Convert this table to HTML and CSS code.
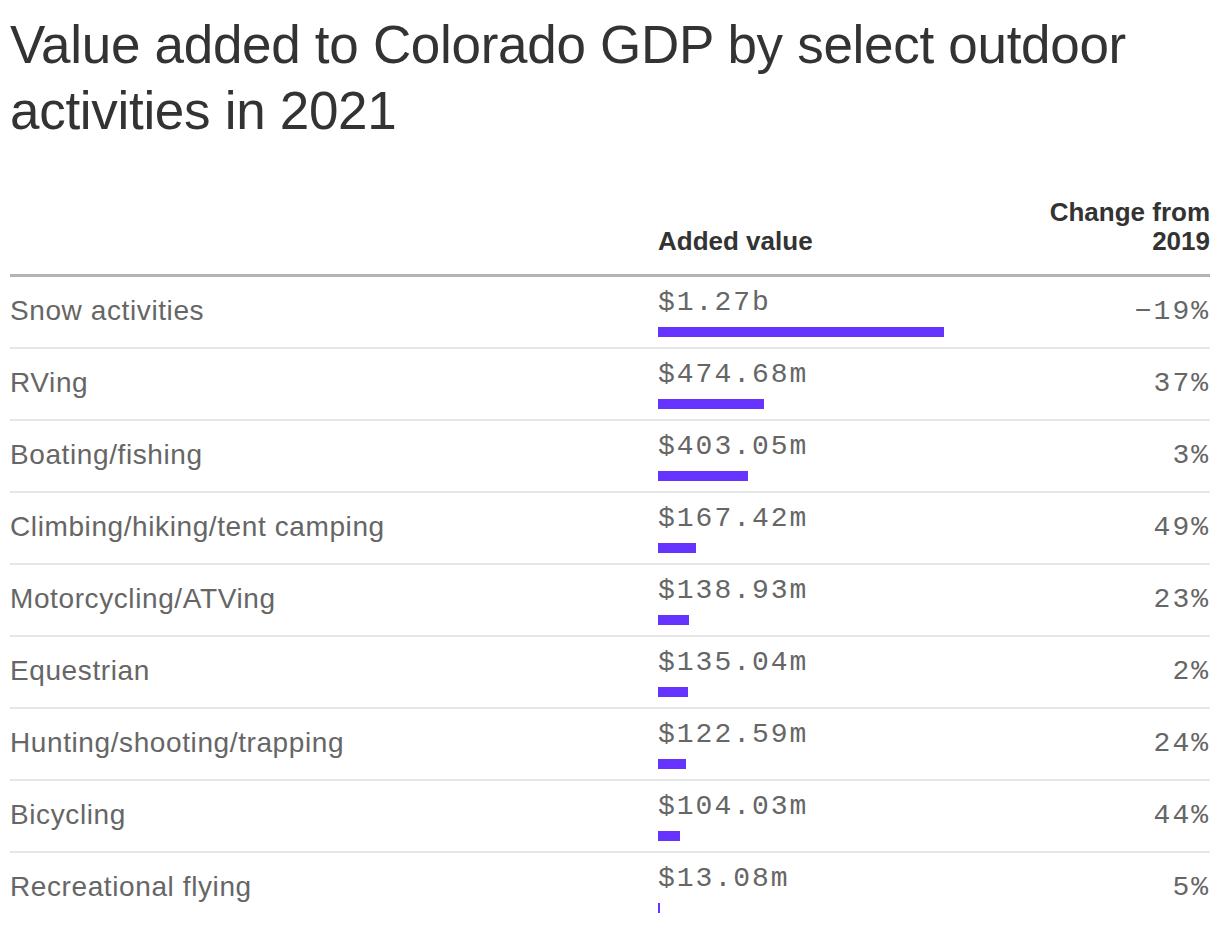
FILE: index.html
```html
<!DOCTYPE html>
<html lang="en">
<head>
<meta charset="utf-8">
<title>Value added to Colorado GDP by select outdoor activities in 2021</title>
<link rel="stylesheet" href="styles.css">
</head>
<body>
<main class="chart">
  <h1 class="title">Value added to Colorado GDP by select outdoor activities in 2021</h1>
  <div class="table">
    <div class="row head">
      <div class="cell label"></div>
      <div class="cell value">Added value</div>
      <div class="cell change">Change from<br>2019</div>
    </div>
    <div class="row">
      <div class="cell label">Snow activities</div>
      <div class="cell value"><span class="num">$1.27b</span><span class="bar" style="width:286px"></span></div>
      <div class="cell change">−19%</div>
    </div>
    <div class="row">
      <div class="cell label">RVing</div>
      <div class="cell value"><span class="num">$474.68m</span><span class="bar" style="width:106px"></span></div>
      <div class="cell change">37%</div>
    </div>
    <div class="row">
      <div class="cell label">Boating/fishing</div>
      <div class="cell value"><span class="num">$403.05m</span><span class="bar" style="width:90px"></span></div>
      <div class="cell change">3%</div>
    </div>
    <div class="row">
      <div class="cell label">Climbing/hiking/tent camping</div>
      <div class="cell value"><span class="num">$167.42m</span><span class="bar" style="width:38px"></span></div>
      <div class="cell change">49%</div>
    </div>
    <div class="row">
      <div class="cell label">Motorcycling/ATVing</div>
      <div class="cell value"><span class="num">$138.93m</span><span class="bar" style="width:31px"></span></div>
      <div class="cell change">23%</div>
    </div>
    <div class="row">
      <div class="cell label">Equestrian</div>
      <div class="cell value"><span class="num">$135.04m</span><span class="bar" style="width:30px"></span></div>
      <div class="cell change">2%</div>
    </div>
    <div class="row">
      <div class="cell label">Hunting/shooting/trapping</div>
      <div class="cell value"><span class="num">$122.59m</span><span class="bar" style="width:28px"></span></div>
      <div class="cell change">24%</div>
    </div>
    <div class="row">
      <div class="cell label">Bicycling</div>
      <div class="cell value"><span class="num">$104.03m</span><span class="bar" style="width:22px"></span></div>
      <div class="cell change">44%</div>
    </div>
    <div class="row last">
      <div class="cell label">Recreational flying</div>
      <div class="cell value"><span class="num">$13.08m</span><span class="bar" style="width:2px"></span></div>
      <div class="cell change">5%</div>
    </div>
  </div>
</main>
</body>
</html>
```
FILE: styles.css
```css
html, body {
  margin: 0;
  padding: 0;
  background: #ffffff;
}
body {
  font-family: "Liberation Sans", Arial, sans-serif;
  color: #333333;
}
.chart {
  padding: 0 10px;
}
.title {
  margin: 0;
  padding-top: 12px;
  font-size: 53px;
  line-height: 66px;
  font-weight: 400;
  color: #333333;
  letter-spacing: -0.3px;
}
.table {
  margin-top: 50px;
}
.row {
  display: grid;
  grid-template-columns: 648px 1fr 200px;
  height: 70px;
  border-bottom: 2px solid #e6e6e6;
}
.row.last {
  border-bottom: none;
}
.row.head {
  height: 80px;
  border-bottom: 3px solid #b3b3b3;
  align-items: end;
}
.cell.label {
  align-self: center;
  font-size: 28px;
  letter-spacing: 0.6px;
  color: #666666;
  padding-bottom: 2px;
}
.cell.value {
  display: flex;
  flex-direction: column;
  align-items: flex-start;
  padding-top: 10px;
}
.num {
  font-family: "Liberation Mono", "DejaVu Sans Mono", monospace;
  font-size: 28px;
  line-height: 32px;
  color: #666666;
  letter-spacing: 2px;
}
.bar {
  display: block;
  height: 10px;
  margin-top: 8px;
  background: #6633ff;
}
.cell.change {
  text-align: right;
  align-self: center;
  font-family: "Liberation Mono", "DejaVu Sans Mono", monospace;
  font-size: 28px;
  color: #666666;
  letter-spacing: 2px;
  padding-bottom: 2px;
}
.row.head .cell {
  align-self: end;
  font-family: "Liberation Sans", Arial, sans-serif;
  font-size: 26px;
  line-height: 29px;
  font-weight: 700;
  letter-spacing: 0;
  color: #333333;
  padding-top: 0;
  padding-bottom: 18px;
}
```
